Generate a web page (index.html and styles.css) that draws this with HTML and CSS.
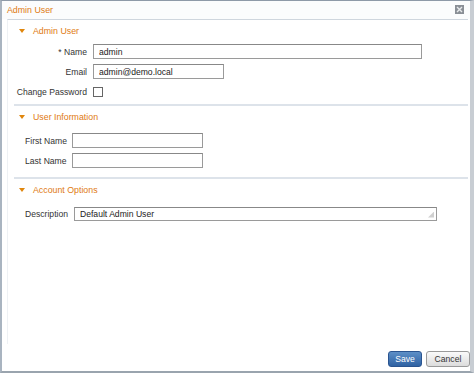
FILE: index.html
```html
<!DOCTYPE html>
<html>
<head>
<meta charset="utf-8">
<link rel="stylesheet" href="styles.css">
</head>
<body>
<div class="window">
  <div class="titlebar">
    <span class="title">Admin User</span>
    <span class="close"><svg width="9" height="9" viewBox="0 0 9 9"><rect x="0" y="0" width="9" height="9" fill="#8a8f96"/><path d="M2 2 L7 7 M7 2 L2 7" stroke="#e8eaec" stroke-width="1.4"/></svg></span>
  </div>
  <div class="panel">
    <div class="section">
      <div class="legend"><span class="tri"></span>Admin User</div>
      <div class="rows rows-a">
        <div class="row"><label class="lab">* Name</label><input class="inp w-name" value="admin"></div>
        <div class="row"><label class="lab">Email</label><input class="inp w-email" value="admin@demo.local"></div>
        <div class="row"><label class="lab">Change Password</label><span class="chk"></span></div>
      </div>
    </div>
    <div class="section">
      <div class="legend"><span class="tri"></span>User Information</div>
      <div class="rows rows-b">
        <div class="row"><label class="lab lab-l">First Name</label><input class="inp w-first"></div>
        <div class="row"><label class="lab lab-l">Last Name</label><input class="inp w-first"></div>
      </div>
    </div>
    <div class="section last">
      <div class="legend"><span class="tri"></span>Account Options</div>
      <div class="rows rows-c">
        <div class="row"><label class="lab lab-l lab-desc">Description</label><div class="inp w-desc">Default Admin User<span class="grip"></span></div></div>
      </div>
    </div>
  </div>
  <div class="buttons">
    <button class="btn save">Save</button>
    <button class="btn cancel">Cancel</button>
  </div>
</div>
</body>
</html>
```
FILE: styles.css
```css
* { box-sizing: border-box; }
html, body { margin: 0; padding: 0; background: #fff; }
body { font-family: "Liberation Sans", Arial, sans-serif; font-size: 8.6px; color: #333; }
.window {
  width: 474px; height: 373px;
  border-left: 2px solid #a9b4c0;
  border-right: 4px solid #c8cdd3;
  border-top: 1px solid #8e9aa8;
  border-bottom: 2px solid #9aa4ae;
  background: #fff;
  display: flex; flex-direction: column;
}
.titlebar {
  height: 18px; display: flex; align-items: center; justify-content: space-between;
  padding: 0 6px 0 5px; background: #fbfcfd;
}
.title { color: #e07a12; font-size: 8.8px; }
.close { display: flex; margin-top: -1px; }
.panel {
  margin-left: 5px; width: 461px; height: 325px;
  border-top: 1px solid #cfd6de; border-left: 1px solid #eef1f4;
  padding: 0 0 0 6px;
}
.section { border-bottom: 2px solid #dde3ea; }
.section.last { border-bottom: none; }
.legend { display: flex; align-items: center; color: #e07a12; font-size: 8.8px; height: 21px; padding-left: 5px; }
.tri { width: 0; height: 0; border-left: 3.5px solid transparent; border-right: 3.5px solid transparent; border-top: 4px solid #e0860c; margin-right: 8px; }
.rows { display: flex; flex-direction: column; }
.rows-a { padding: 3px 0 5px 0; gap: 5px; }
.rows-b { padding: 6px 0 9px 0; gap: 5px; }
.rows-c { padding: 6px 0 0 0; }
.row { display: flex; align-items: center; height: 15px; }
.lab { width: 79px; text-align: right; padding-right: 6px; color: #333; white-space: nowrap; }
.lab-l { text-align: left; width: 58px; padding-left: 11px; }
.lab-desc { width: 60px; }
.inp {
  height: 15px; border: 1px solid #9a9a9a; border-top-color: #888; padding: 0 5px;
  font: inherit; color: #222; background: #fff; outline: none; display: flex; align-items: center;
}
.w-name { width: 329px; }
.w-email { width: 131px; }
.w-first { width: 131px; }
.w-desc { width: 363px; height: 14px; position: relative; }
.grip { position: absolute; right: 2px; bottom: 2px; width: 6px; height: 6px;
  background: radial-gradient(circle, #999 0.6px, transparent 0.8px) 0 0 / 2px 2px;
  clip-path: polygon(100% 0, 100% 100%, 0 100%); }
.chk { width: 10px; height: 10px; border: 1px solid #666; background: #fff; }
.buttons { display: flex; justify-content: flex-end; gap: 4px; padding: 7px 0 0 0; }
.btn { height: 16px; font: inherit; font-size: 8.6px; border-radius: 3px; padding: 0; display: flex; align-items: center; justify-content: center; }
.save { width: 34px; color: #fff; background: linear-gradient(#5d8fc7, #2f62a3); border: 1px solid #2a5490; }
.cancel { width: 44px; color: #333; background: linear-gradient(#fafafa, #dcdcdc); border: 1px solid #9a9a9a; }
```
